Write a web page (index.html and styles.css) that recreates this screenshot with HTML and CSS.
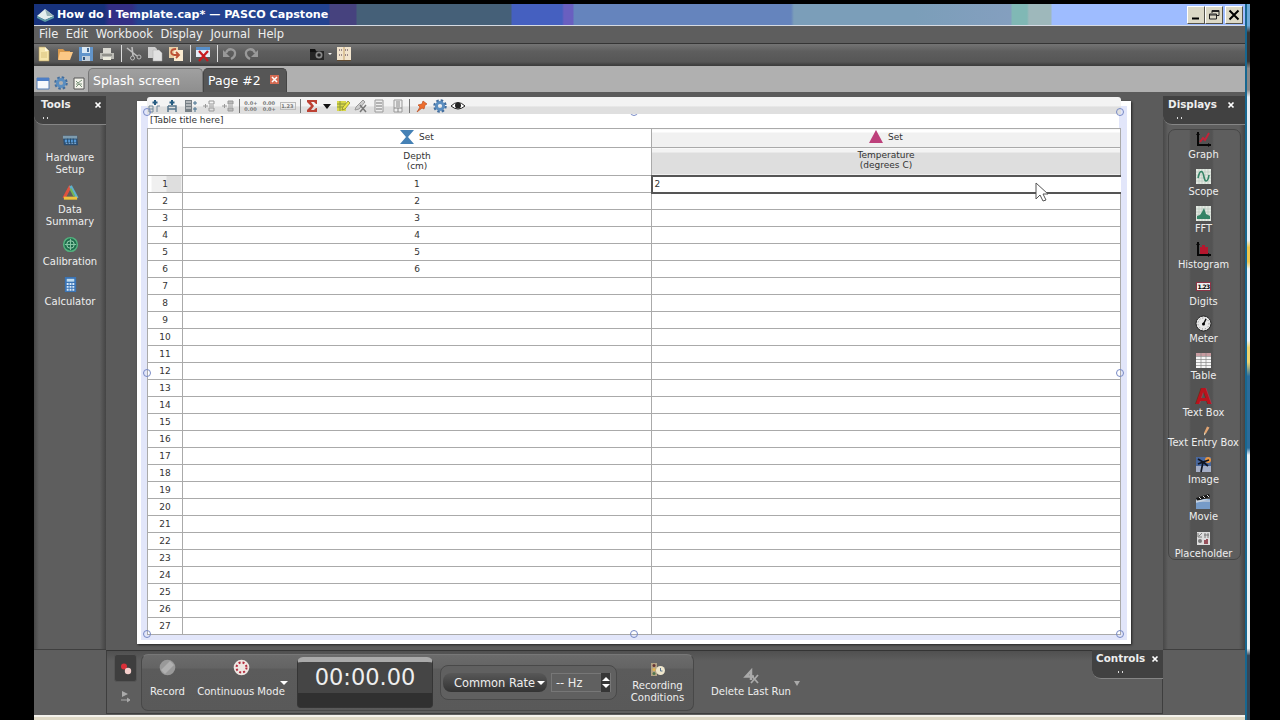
FILE: index.html
```html
<!DOCTYPE html>
<html lang="en">
<head>
  <meta charset="UTF-8" />
  <title>How do I Template.cap* — PASCO Capstone</title>
  <link rel="stylesheet" href="styles.css">
</head>
<body>
  <div class="screen">
    <div class="window">
      <!-- Title bar -->
      <header class="titlebar">
        <svg class="app-icon" viewBox="0 0 17 14"><path d="M8 1L0 8l8 4 9-4z" fill="#e4efed"/><path d="M8 1l2 7 7 0z" fill="#9ab5b8"/><path d="M0 8l8 4 9-4v2l-9 4-8-4z" fill="#5b9aa5"/></svg>
        <span class="title">How do I Template.cap* — PASCO Capstone</span>
        <div class="window-buttons">
          <button><svg viewBox="0 0 14 14"><path d="M3 10.500h7" stroke="#000" stroke-width="2"/></svg></button>
          <button><svg viewBox="0 0 14 14" fill="none" stroke="#222"><path d="M5 5V2.500h7v5h-2M5 3.500h7M2.500 6h7v5h-7zM2.500 7h7"/></svg></button>
          <button class="close"><svg viewBox="0 0 14 14"><path d="M2.500 2.500l9 9M11.500 2.500l-9 9" stroke="#000" stroke-width="2"/></svg></button>
        </div>
      </header>

      <nav class="menubar">
        <span>File</span><span>Edit</span><span>Workbook</span><span>Display</span><span>Journal</span><span>Help</span>
      </nav>

      <!-- Main toolbar -->
      <div class="toolbar">
        <svg class="tool" viewBox="0 0 16 16"><path d="M3 1h6l4 4v10H3z" fill="#f6e6ac" stroke="#b69b5d" stroke-width=".6"/><path d="M9 1v4h4" fill="#fff8db"/><path d="M5 7h6M5 9h6M5 11h6" stroke="#d9c27d"/></svg>
        <svg class="tool" viewBox="0 0 16 16"><path d="M1 3h5l2 2h5v8H1z" fill="#d99a4e"/><path d="M3 6h13l-3 8H1z" fill="#fbc785"/></svg>
        <svg class="tool" viewBox="0 0 16 16"><path d="M1 1h14v14H1z" fill="#6295cb"/><path d="M4 1h8v6H4z" fill="#dbe9f4"/><path d="M4 10h8v5H4z" fill="#c3d0dc"/><path d="M5 11h2v3H5z" fill="#31547c"/><path d="M9 2h2v4H9z" fill="#476f9d"/></svg>
        <svg class="tool" viewBox="0 0 16 16"><path d="M4 2h8v5H4z" fill="#dad9d2"/><path d="M1 7h14v6H1z" fill="#bbbbb5"/><path d="M3 9h10" stroke="#686862"/><path d="M4 11h8v3H4z" fill="#ecebdd"/></svg>
        <i class="sep"></i>
        <svg class="tool" viewBox="0 0 16 16" fill="none" stroke="#bdbdbd"><path d="M1 2l10 8M6 1l1 9" stroke-width="1.600"/><circle cx="6.500" cy="12" r="2"/><circle cx="13" cy="11" r="2"/></svg>
        <svg class="tool" viewBox="0 0 16 16"><path d="M1 1h7l2 2v9H1z" fill="#cfcfcf"/><path d="M6 4h6l3 3v8H6z" fill="#e1e1e1" stroke="#aaa" stroke-width=".5"/></svg>
        <svg class="tool" viewBox="0 0 16 16"><path d="M1 1h9v11H1z" fill="#e8cfa7"/><path d="M6 4h9v11H6z" fill="#f9ead0"/><path d="M8 3C2 3 2 8 6 9h4M8 6l3 3-3 3" fill="none" stroke="#bd5236" stroke-width="1.800"/></svg>
        <i class="sep"></i>
        <svg class="tool" viewBox="0 0 16 16"><path d="M1 1h14v10H1z" fill="#e4edf7"/><path d="M1 1h14v3H1z" fill="#568fcb"/><path d="M4 5l9 10M13 5L4 15" stroke="#c71b21" stroke-width="2.300"/></svg>
        <i class="sep"></i>
        <svg class="tool" viewBox="0 0 16 16"><path d="M4 7c2-6 10-4 9 1 0 3-2 4-4 5" fill="none" stroke="#999" stroke-width="2.300"/><path d="M1 4v7h7z" fill="#999"/></svg>
        <svg class="tool" viewBox="0 0 16 16"><path d="M12 7C10 1 2 3 3 8c0 3 2 4 4 5" fill="none" stroke="#999" stroke-width="2.300"/><path d="M15 4v7H8z" fill="#999"/></svg>
        <svg class="tool camera" viewBox="0 0 16 16"><path d="M1 3h5l1 2h8v9H1z" fill="#252525"/><path d="M1 3h5l1 3H1z" fill="#111"/><circle cx="10" cy="9" r="3.500" fill="#888"/><circle cx="10" cy="9" r="1.800" fill="#222"/></svg>
        <i class="tiny-arrow"></i>
        <svg class="tool journal" viewBox="0 0 16 16"><path d="M1 1h14v13H1z" fill="#f1e4cd"/><path d="M1 14.500h14" stroke="#614b32"/><path d="M8 1v13" stroke="#c7a469"/><path d="M3 4h4M3 9h4M9 4h4M9 9h4" stroke="#9a8888" stroke-width="2" stroke-dasharray="1 1"/></svg>
      </div>

      <!-- Page tabs -->
      <div class="tabbar">
        <svg class="tab-tool" viewBox="0 0 14 14"><path d="M1 2h12v11H1z" fill="#f7f9fc" stroke="#577eb6"/><path d="M1 2h12v3H1z" fill="#4d7ec6"/></svg>
        <svg class="tab-tool" viewBox="0 0 14 14"><use href="#gear"/></svg>
        <svg class="tab-tool" viewBox="0 0 14 14"><path d="M2 2h10v11H2z" fill="#f4f4ec" stroke="#555"/><path d="M4 5l2 2 4-3M4 11l3-3 3 3M4 8h6" fill="none" stroke="#799178"/></svg>
        <div class="tab">Splash screen</div>
        <div class="tab active">Page #2 <span class="tab-close"><svg viewBox="0 0 9 9"><path d="M2 2l5 5M7 2L2 7" stroke="#fff" stroke-width="1.500"/></svg></span></div>
      </div>

      <div class="main">
        <aside class="panel tools">
          <div class="panel-title"><b>Tools</b><svg class="panel-close" viewBox="0 0 8 8"><use href="#close"/></svg><i class="dots"></i></div>
          <div class="tool-list">
            <div class="item"><svg viewBox="0 0 18 18"><path d="M1 4h15l1 10H2z" fill="#294d72"/><path d="M1 4h15v3H1z" fill="#7e9caf"/><path d="M3 8h12v3H3z" fill="#5598d7"/><path d="M4 12h11" stroke="#8ebbe3" stroke-dasharray="2 1"/><path d="M6 7v5M9 7v5M12 7v5" stroke="#244967"/></svg><span>Hardware<br>Setup</span></div>
            <div class="item"><svg viewBox="0 0 18 18" fill="none" stroke-width="3.200"><path d="M9 2L2 15" stroke="#e0523f"/><path d="M9 2l7 13" stroke="#5fb0cc"/><path d="M2 15h14" stroke="#efc23c"/><path d="M9 5l4 8" stroke="#75b454" stroke-width="2"/></svg><span>Data<br>Summary</span></div>
            <div class="item"><svg viewBox="0 0 18 18" fill="none"><circle cx="9" cy="9" r="7.300" fill="#1f6e4d" stroke="#54b37f" stroke-width="1.500"/><circle cx="9" cy="9" r="4" stroke="#a1d7b9"/><path d="M9 3v12M3 9h12" stroke="#8acba7"/></svg><span>Calibration</span></div>
            <div class="item"><svg viewBox="0 0 18 18"><path d="M3 1h12v16H3z" fill="#3b75b6"/><path d="M5 3h8v3H5z" fill="#bedbef"/><path d="M5 8.500h8M5 11.500h8M5 14.500h8" stroke="#d9eafb" stroke-width="2" stroke-dasharray="2 1"/></svg><span>Calculator</span></div>
          </div>
        </aside>

        <section class="workspace">
          <div class="page">
            <div class="page-inner">
              <!-- Table display tools -->
              <div class="table-tools">
                <svg viewBox="0 0 14 14"><path d="M2 7h4v6H2zM2 10h4M10 13V7h3" fill="none" stroke="#718899"/><path d="M8 1v5M5.500 3.500h5" stroke="#285d82" stroke-width="2"/></svg>
                <svg viewBox="0 0 14 14"><path d="M3 7h8v6M3 7v6M3 10h8" fill="none" stroke="#56748b" stroke-width="1.500"/><path d="M7 1v5M4.500 3.500h5" stroke="#285d82" stroke-width="2"/></svg>
                <svg viewBox="0 0 14 14"><path d="M1 1h7v12H1z" fill="#777f85"/><path d="M2 3h5M2 6h5M2 9h5" stroke="#eee"/><path d="M11 2v4M9 4h4M11 8v5M9 10h4" stroke="#47718e"/></svg>
                <svg viewBox="0 0 14 14" fill="none" stroke="#999"><path d="M7 2h5v3H7zM7 9h5v3H7zM7 7h5M1 7h5M3.500 5v4"/></svg>
                <svg viewBox="0 0 14 14" fill="none" stroke="#999"><path d="M7 2h5v3H7zM7 9h5v3H7z" fill="#bbb"/><path d="M7 7h5M1 7h5M3.500 5v4"/></svg>
                <i></i>
                <span class="digits">0.0+<br>0.00</span>
                <span class="digits">0.00<br>0.0+</span>
                <span class="digits boxed">1.23</span>
                <i></i>
                <svg viewBox="0 0 14 14"><path d="M2 1h10v4h-1L9 3H6l3 4-3 4h3l2-2h1v4H2v-2l4-4-4-4z" fill="#bd4133"/></svg>
                <svg class="arrow" viewBox="0 0 8 14"><path d="M0 5h8l-4 5z" fill="#111"/></svg>
                <svg viewBox="0 0 14 14"><path d="M1 2h9v10H1z" fill="#d9d84b"/><path d="M1 5h9M1 8h9M4 2v10" stroke="#8c983a"/><path d="M6 11l1-3 5-6 2 2-5 6z" fill="#ece849" stroke="#7e7e2c" stroke-width=".7"/></svg>
                <svg viewBox="0 0 14 14"><path d="M1 11l1-3 7-7 2 2-6 7z" fill="#ccc" stroke="#999"/><path d="M6 6l6 7M12 6l-6 7" stroke="#777" stroke-width="1.500"/></svg>
                <svg viewBox="0 0 14 14"><path d="M3 1h8v12H3z" fill="#eee" stroke="#999"/><path d="M4 4h6M4 7h6M4 10h6" stroke="#777"/></svg>
                <svg viewBox="0 0 14 14"><path d="M3 1h8v12H3z" fill="#eee" stroke="#999"/><path d="M5 3h4M5 5h4M5 7h4M3 9h8M7 9v4" stroke="#888"/></svg>
                <i></i>
                <svg viewBox="0 0 14 14"><path d="M8 2l4 3-2 1-1 4-2-1-5 4 3-5-2-2 4-1z" fill="#ee6d2c" stroke="#bd4e20" stroke-width=".7"/></svg>
                <svg viewBox="0 0 14 14"><use href="#gear"/></svg>
                <svg viewBox="0 0 14 14"><path d="M0 7q7-7 14 0-7 6-14 0" fill="#fff" stroke="#222"/><circle cx="7" cy="6.500" r="3" fill="#222"/></svg>
              </div>
              <div class="table-title">[Table title here]</div>
              <table>
                <colgroup><col class="col-num"><col class="col-data"><col class="col-data"></colgroup>
                <thead>
                  <tr class="set-row">
                    <th rowspan="2"></th>
                    <th><div class="set"><svg viewBox="0 0 14 14"><path d="M0 0h14L8 7l6 7H0l6-7z" fill="#4581b5"/></svg>Set</div></th>
                    <th class="selected"><div class="set"><svg viewBox="0 0 14 14"><path d="M7 0l7 13H0z" fill="#bd407b"/></svg>Set</div></th>
                  </tr>
                  <tr class="unit-row">
                    <th>Depth<br>(cm)</th>
                    <th class="selected">Temperature<br>(degrees C)</th>
                  </tr>
                </thead>
                <tbody id="tableBody">
                  <!-- Filled by JavaScript -->
                </tbody>
              </table>
              <!-- Resize handles -->
              <i class="handle tl"></i><i class="handle tr"></i><i class="handle tm"></i>
              <i class="handle ml"></i><i class="handle mr"></i>
              <i class="handle bl"></i><i class="handle bm"></i><i class="handle br"></i>
              <svg class="cursor" viewBox="0 0 14 21"><path d="M1 1v16l4-4 3 6 3-1-3-6h5z" fill="#fff" stroke="#555"/></svg>
            </div>
          </div>
        </section>

        <aside class="panel displays">
          <div class="panel-title"><b>Displays</b><svg class="panel-close" viewBox="0 0 8 8"><use href="#close"/></svg><i class="dots"></i></div>
          <div class="display-list">
            <div class="item"><svg viewBox="0 0 17 17"><path d="M3 1v13h13" fill="none" stroke="#080808" stroke-width="2"/><path d="M1 4l2-3 2 3M13 12l3 2-3 2" fill="#080808"/><path d="M5 11l3-4 2 2 4-7" fill="none" stroke="#c42238" stroke-width="1.900"/></svg><span>Graph</span></div>
            <div class="item"><svg viewBox="0 0 17 17"><use href="#graph-paper"/><path d="M3 10C5 0 8 3 9 9s4 5 5-2" fill="none" stroke="#348366" stroke-width="1.600"/></svg><span>Scope</span></div>
            <div class="item"><svg viewBox="0 0 17 17"><use href="#graph-paper"/><path d="M2 14v-3l3-1 2-3 2-4 2 6 4 2v3z" fill="#348366"/></svg><span>FFT</span></div>
            <div class="item"><svg viewBox="0 0 17 17"><path d="M3 1v13h13" fill="none" stroke="#080808" stroke-width="2"/><path d="M1 4l2-3 2 3M13 12l3 2-3 2" fill="#080808"/><path d="M5 13V6h2V4h3v2h3v7z" fill="#b5162d"/></svg><span>Histogram</span></div>
            <div class="item"><div class="digits-icon">1.23</div><span>Digits</span></div>
            <div class="item"><svg viewBox="0 0 17 17"><circle cx="8.500" cy="8.500" r="7.500" fill="#e8e8e8" stroke="#222"/><circle cx="8.500" cy="8.500" r="5.500" fill="none" stroke="#888" stroke-dasharray="1 2"/><path d="M8.500 9L11 4" stroke="#111" stroke-width="1.500"/><circle cx="8.500" cy="9" r="1.500"/></svg><span>Meter</span></div>
            <div class="item"><svg viewBox="0 0 17 17"><path d="M1 1h15v15H1z" fill="#f6f6f6"/><path d="M1 1h15v3H1z" fill="#c79ba0"/><path d="M1 4.500h15M1 7.500h15M1 10.500h15M1 13.500h15M6 1v15M11 1v15" stroke="#888" stroke-width=".7"/></svg><span>Table</span></div>
            <div class="item"><div class="letter-icon">A</div><span>Text Box</span></div>
            <div class="item short"><svg viewBox="0 0 17 11"><path d="M9 8l3-6.500 2.500 1L11 8.500z" fill="#e3a674"/><path d="M9 8l2 .500L9 10.500z" fill="#ecd9b8"/></svg><span>Text Entry Box</span></div>
            <div class="item"><svg viewBox="0 0 17 17"><path d="M1 1h15v15H1z" fill="#48679d"/><path d="M1 10h15v6H1z" fill="#a6afc7"/><circle cx="13" cy="4" r="3" fill="#e89643"/><path d="M8 6L6 16M8 6L3 3M8 6l6-2M8 6L3 8M8 6l5 4" stroke="#101522" stroke-width="1.700"/></svg><span>Image</span></div>
            <div class="item"><svg viewBox="0 0 17 17"><path d="M1 6h14v10H1z" fill="#b4cbe8"/><path d="M1 10l14-4v10H1z" fill="#769bc8"/><path d="M1 5l13-4 1 3L2 8z" fill="#171717"/><path d="M4 4l2 2M8 3l2 2M12 2l2 2M1 8h14" stroke="#ddd"/></svg><span>Movie</span></div>
            <div class="item"><svg viewBox="0 0 17 17"><path d="M2 2h13v13H2z" fill="#ddd"/><path d="M3 3v4h4M4 6l3-3M10 3v5M13 3v5M9 5h5" fill="none" stroke="#666" stroke-width=".8"/><circle cx="5" cy="11" r="2" fill="#777"/><path d="M9 14v-4h2v-1h2v5z" fill="#96505b"/></svg><span>Placeholder</span></div>
          </div>
        </aside>
      </div>

      <!-- Recording controls -->
      <footer class="bottom">
        <div class="controls">
          <div class="modes">
            <div class="mode-on"><svg viewBox="0 0 14 14"><circle cx="5" cy="4.500" r="3" fill="#da3039"/><circle cx="9" cy="9" r="3.200" fill="#f4cecb"/></svg></div>
            <svg class="mode-play" viewBox="0 0 14 14"><path d="M3 1l6 3-6 3z" fill="#aaa"/><path d="M2 10h8M8 8l3 2-3 2" stroke="#aaa" fill="#aaa"/></svg>
          </div>
          <div class="control-group">
            <div class="ctl record"><svg viewBox="0 0 17 17"><circle cx="8.500" cy="8.500" r="7.800" fill="#999"/><path d="M2 11l9-9 4 4-9 9z" fill="#b0b0b0"/></svg><span>Record</span></div>
            <div class="ctl continuous"><svg viewBox="0 0 17 17"><circle cx="8.500" cy="8.500" r="7.800" fill="#eee6e2"/><circle cx="8.500" cy="8.500" r="5" fill="none" stroke="#b32b3d" stroke-width="2" stroke-dasharray="2 2"/></svg><span>Continuous Mode</span><i class="down"></i></div>
            <div class="timer"><div class="time">00:00.00</div></div>
            <div class="rate"><div class="common">Common Rate<i class="down"></i></div><div class="hz"><span>-- Hz</span><div class="spin"><i class="up"></i><i class="down"></i></div></div></div>
            <div class="ctl conditions"><svg viewBox="0 0 17 17"><path d="M2 2h6v13H2z" fill="#b3a283"/><circle cx="5" cy="4.500" r="1.500" fill="#633"/><circle cx="5" cy="8.500" r="1.500" fill="#e4b34d"/><circle cx="5" cy="12.500" r="1.500" fill="#50764d"/><circle cx="11.500" cy="9.500" r="4.500" fill="#eee6cc"/><path d="M11.500 7v3h2" fill="none" stroke="#597792"/></svg><span>Recording<br>Conditions</span></div>
          </div>
          <div class="ctl delete"><svg viewBox="0 0 17 17" fill="none" stroke="#aaa"><path d="M8 12V3L3 8.500h8" stroke-width="2.500"/><path d="M8 7l7 8M15 7l-7 8" stroke-width="1.800"/></svg><span>Delete Last Run</span><i class="hollow"></i></div>
          <div class="panel-title controls-title"><b>Controls</b><svg class="panel-close" viewBox="0 0 8 8"><use href="#close"/></svg><i class="dots"></i></div>
        </div>
      </footer>
      <div class="taskbar"></div>
    </div>
    <div class="desktop-edge"></div>
  </div>

  <!-- Shared icons -->
  <svg class="defs">
    <symbol id="gear" viewBox="0 0 14 14"><circle cx="7" cy="7" r="5.500" fill="none" stroke="#426d9d" stroke-width="2.500" stroke-dasharray="2.400 1.920"/><circle cx="7" cy="7" r="3.600" fill="none" stroke="#5b8ec0" stroke-width="3"/></symbol>
    <symbol id="close" viewBox="0 0 8 8"><path d="M1.500 1.500l5 5M6.500 1.500l-5 5" stroke="#fff" stroke-width="1.700"/></symbol>
    <symbol id="graph-paper" viewBox="0 0 17 17"><path d="M1 1h15v15H1z" fill="#e3e9e2"/><path d="M4 1v15M7 1v15M10 1v15M13 1v15M1 4h15M1 7h15M1 10h15M1 13h15" stroke="#b2c3b9" stroke-width=".6"/></symbol>
  </svg>

  <script>
    const tableBody = document.getElementById('tableBody');
    for (let i = 1; i <= 27; i++) {
      const row = document.createElement('tr');
      row.innerHTML = `
        <td>${i}</td>
        <td>${i <= 6 ? i : ''}</td>
        <td class="${i === 1 ? 'editing' : ''}">${i === 1 ? '2' : ''}</td>
      `;
      tableBody.appendChild(row);
    }
  </script>
</body>
</html>
```
FILE: styles.css
```css
* {
  box-sizing: border-box;
}

body {
  margin: 0;
  background: #000;
  font-family: "DejaVu Sans", sans-serif;
  font-size: 10px;
  color: #eee;
  overflow: hidden;
}

svg {
  display: block;
  flex: none;
}

.defs {
  display: none;
}

.screen {
  width: 1280px;
  height: 720px;
  padding: 4px 30px 0 34px;
  display: flex;
}

.window {
  width: 1211px;
  height: 716px;
  display: flex;
  flex-direction: column;
  background: #5e5e5e;
}

.desktop-edge {
  width: 5px;
  background: linear-gradient(90deg, #176790 2px, transparent 2px), linear-gradient(#6da9d8 0 3%, #333 4% 8%, #888 9% 12%, #e4edf4 13% 33%, #edc64d 34% 36%, #e9f1f5 37% 47%, #ecd46f 48% 50%, #2a6b99 52% 62%, #e9f1f5 63% 90%, #345 91%);
}

/* Title bar */
.titlebar {
  height: 22px;
  flex: none;
  display: flex;
  align-items: center;
  padding-left: 3px;
  border-bottom: 1px solid #d6dbe3;
  background: linear-gradient(90deg, #17327c 0 70px, #332f85 75px 98px, #23428f 104px 295px, #46427e 296px 322px, #456078 323px 477px, #4560c0 478px 528px, #695fc0 530px 539px, #6584bd 540px 757px, #7b9eb9 760px 880px, #849fbf 977px, #80b8b5 978px 993px, #9eb8bb 995px 1017px, #9ebcff 1018px);
}

.app-icon {
  width: 17px;
  height: 14px;
}

.title {
  margin-left: 3px;
  font-size: 11.15px;
  font-weight: bold;
  color: #fff;
  white-space: nowrap;
}

.window-buttons {
  margin-left: auto;
  padding-right: 2px;
  display: flex;
}

.window-buttons button {
  width: 18px;
  height: 18px;
  padding: 1px;
  background: #dcd9c7;
  border: 1px solid;
  border-color: #fff #55534b #55534b #fff;
}

.window-buttons .close {
  margin-left: 2px;
}

.menubar {
  height: 18px;
  flex: none;
  display: flex;
  gap: 7.6px;
  padding-left: 5px;
  line-height: 16px;
  font-size: 11.5px;
  border-bottom: 1px solid #353535;
}

/* Main toolbar */
.toolbar {
  height: 22px;
  flex: none;
  display: flex;
  align-items: center;
  padding-bottom: 2px;
  background: linear-gradient(#747474, #5e5e5e 35%, #565656 85%, #3f3f3f);
  border-bottom: 1px solid #3e3e3e;
}

.tool {
  width: 16px;
  height: 16px;
  margin: 0 2.5px;
}

.tool:first-child {
  margin-left: 1.5px;
}

.sep {
  width: 1px;
  height: 17px;
  margin: 0 1px 0 4px;
  background: #ddd;
}

.camera {
  margin-left: 48px;
}

.tiny-arrow {
  border: 2px solid transparent;
  border-top-color: #eee;
  border-bottom: 0;
}

.journal {
  margin-left: 4px;
}

/* Tabs */
.tabbar {
  height: 26px;
  flex: none;
  display: flex;
  align-items: flex-end;
  padding-left: 2px;
  background: #b0b0b0;
}

.tab-tool {
  width: 14px;
  height: 14px;
  margin: 0 4px 2px 0;
}

.tab-tool:nth-child(3) {
  margin-right: 2px;
}

.tab {
  height: 24px;
  width: 115px;
  padding: 3px 4px;
  font-size: 12.5px;
  line-height: 17px;
  color: #fff;
  background: linear-gradient(#a0a0a0, #8e8e8e);
  border: 1px solid #777;
  border-bottom: 0;
  border-radius: 5px 5px 0 0;
  white-space: nowrap;
}

.tab.active {
  width: 84px;
  background: #565656;
  border-color: #444;
  display: flex;
  align-items: center;
  justify-content: space-between;
}

.tab-close {
  width: 9px;
  height: 9px;
  margin: 0 3px 2px 0;
  background: #d46a52;
}

/* Panels */
.main {
  height: 558px;
  flex: none;
  display: grid;
  grid-template-columns: 72px 1fr 82px;
  background: #5b5b5b;
}

.panel {
  margin-top: 4px;
  border-bottom: 1px solid #3f3f3f;
  background: linear-gradient(90deg, #484848, #5e5e5e 5px calc(100% - 6px), #444);
}

.panel-title {
  height: 29px;
  display: grid;
  grid-template-columns: 1fr auto;
  align-content: start;
  padding: 2px 4px 0 7px;
  background: #414141;
  border-bottom: 1px solid #858585;
  border-radius: 0 0 0 9px;
  font-size: 10.4px;
  line-height: 13px;
}

.panel-close {
  width: 8px;
  height: 8px;
  margin-top: 3px;
}

.dots {
  width: 5px;
  height: 2px;
  margin: 6px 0 0 2px;
  border: solid #ddd;
  border-width: 0 1px;
}

.tool-list {
  padding-top: 7px;
  display: flex;
  flex-direction: column;
  gap: 8px;
}

.item {
  display: flex;
  flex-direction: column;
  align-items: center;
  text-align: center;
  line-height: 12px;
  white-space: nowrap;
}

.tools .item svg {
  width: 17px;
  height: 17px;
  margin-bottom: 3px;
}

.displays .panel-title {
  padding-left: 5px;
  padding-right: 10px;
}

.displays .dots {
  margin-left: 9px;
}

.display-list {
  width: 73px;
  height: 431px;
  margin: 4px 0 0 5px;
  padding: 1px 2px 0 0;
  border: 1px solid #454545;
  border-radius: 7px;
  background: linear-gradient(90deg, transparent 20px, #535353 22px 43px, transparent 45px);
}

.display-list .item {
  height: 36.8px;
  font-size: 9.9px;
  line-height: 13px;
}

.display-list svg {
  width: 17px;
  height: 17px;
}

.display-list .short {
  height: 31px;
}

.display-list .short svg {
  height: 11px;
}

.digits-icon {
  width: 15px;
  height: 9px;
  margin: 4px 0;
  background: #eee;
  border: 1px solid #8d3446;
  color: #000;
  font-size: 6px;
  line-height: 7px;
  font-weight: bold;
  letter-spacing: -0.7px;
}

.letter-icon {
  height: 17px;
  color: #b9141d;
  font: bold 21px/17px "DejaVu Sans", sans-serif;
}

/* Page with the table */
.workspace {
  padding: 9px 0 0 31px;
}

.page {
  width: 994px;
  height: 543px;
  padding: 5px 4px 4px;
  background: #fff;
  box-shadow: 1px 1px 2px #222;
}

.page-inner {
  position: relative;
  height: 534px;
  padding: 8px 8px 7px 7px;
  background: #e2e6fa;
}

.table-tools {
  position: absolute;
  left: 6px;
  top: -9px;
  width: 974px;
  height: 17px;
  display: flex;
  align-items: center;
  gap: 4.4px;
  background: linear-gradient(#f3f3f3 50%, #dfdfdf 60%);
  border-radius: 3px 3px 0 0;
}

.table-tools svg {
  width: 14px;
  height: 14px;
}

.table-tools .arrow {
  width: 8px;
}

.table-tools i {
  width: 1px;
  height: 14px;
  background: #777;
}

.digits {
  width: 14px;
  color: #777;
  font-size: 5px;
  line-height: 6px;
  font-weight: bold;
}

.boxed {
  outline: 1px solid #bbb;
}

.table-title {
  height: 14px;
  padding-left: 2px;
  background: #fff;
  color: #333;
  font-size: 8.95px;
  line-height: 13px;
}

table {
  width: 974px;
  margin-left: -1px;
  table-layout: fixed;
  border-collapse: collapse;
  background: #fff;
  color: #333;
  font-size: 9px;
}

.col-num {
  width: 35px;
}

th, td {
  padding: 0;
  border: 1px solid #aaa;
  font-weight: normal;
  text-align: center;
}

tbody tr {
  height: 17px;
}

td {
  line-height: 15px;
}

.set-row {
  height: 19px;
}

.unit-row {
  height: 28px;
  line-height: 10px;
}

.unit-row th {
  padding-bottom: 2px;
}

.set-row .selected {
  background: linear-gradient(#fff 3px, #f1f1f1 3px);
}

.unit-row .selected {
  background: linear-gradient(#f3f3f3 4px, #dedede 4px 26px, #fff 26px);
}

.set {
  display: flex;
  justify-content: center;
  align-items: center;
  gap: 5px;
  padding-bottom: 2px;
}

.set svg {
  width: 14px;
  height: 14px;
}

tbody tr:first-child td:first-child {
  background: linear-gradient(90deg, #fff 3px, #f0f0f0 3px 18px, #dedede 18px 33px, #fff 33px);
}

td.editing {
  padding-left: 2px;
  text-align: left;
  border: 2px solid #555;
  border-right: 0;
  line-height: 14px;
}

.handle {
  position: absolute;
  width: 8px;
  height: 8px;
  border: 1px solid #7789c5;
  border-radius: 50%;
}

.tl, .ml, .bl { left: 2px; }
.tr, .mr, .br { right: 3px; }
.tm, .bm { left: 489px; }
.tl, .tr { top: 2px; }
.ml, .mr { top: 263px; }
.bl, .bm, .br { bottom: 2px; }

.tm {
  top: 2px;
  clip-path: inset(6px 0 0);
}

.cursor {
  position: absolute;
  left: 894px;
  top: 76px;
  width: 14px;
  height: 21px;
}

/* Recording controls */
.bottom {
  height: 65px;
  flex: none;
  padding: 0 82px 0 72px;
}

.controls {
  height: 64px;
  display: flex;
  border: 1px solid #3e3e3e;
  border-top-color: #343434;
  background: linear-gradient(#505050, #5e5e5e 10px);
}

.modes {
  width: 34px;
  padding: 3px 0 0 7px;
}

.mode-on {
  width: 23px;
  height: 28px;
  padding: 7px 4px;
  background: #3e3e3e;
  border: 1px solid #555;
  border-radius: 3px;
}

.modes svg {
  width: 14px;
  height: 14px;
}

.mode-play {
  margin: 8px 0 0 5px;
}

.control-group {
  width: 553px;
  height: 57px;
  margin-top: 3px;
  display: flex;
  background: linear-gradient(#6b6b6b, #646464 13px, #5b5b5b 14px, #595959);
  border: 1px solid #484848;
  border-top-color: #777;
  border-radius: 7px;
}

.ctl {
  position: relative;
  display: flex;
  flex-direction: column;
  align-items: center;
  text-align: center;
  font-size: 10.1px;
  line-height: 12px;
  white-space: nowrap;
}

.ctl svg {
  width: 17px;
  height: 17px;
}

.record {
  width: 51px;
  padding-top: 4px;
}

.continuous {
  width: 96px;
  padding-top: 4px;
}

.record span, .continuous span {
  margin-top: 10px;
}

.down, .up {
  border: 4px solid transparent;
  border-top-color: #fff;
  border-bottom: 0;
}

.up {
  border-top: 0;
  border-bottom: 4px solid #fff;
}

.continuous .down {
  position: absolute;
  right: 1px;
  top: 26px;
}

.timer {
  width: 136px;
  height: 51px;
  margin: 2px 0 0 8px;
  border: 1px solid #353535;
  border-top: 5px solid #aaa;
  border-radius: 6px 6px 4px 4px;
  background: linear-gradient(#454545 31px, #303030 31px);
}

.time {
  font-size: 22.5px;
  line-height: 31px;
  text-align: center;
}

.rate {
  width: 177px;
  height: 35px;
  margin: 10px 0 0 7px;
  display: flex;
  align-items: center;
  padding-left: 2px;
  border: 1px solid #494949;
  border-radius: 8px;
  background: #606060;
}

.common {
  width: 104px;
  height: 19px;
  display: flex;
  align-items: center;
  justify-content: flex-end;
  gap: 2px;
  padding-right: 2px;
  border-radius: 8px;
  background: linear-gradient(#585858, #333);
  font-size: 11.4px;
  white-space: nowrap;
}

.hz {
  height: 19px;
  width: 60px;
  margin-left: 4px;
  padding-left: 4px;
  display: flex;
  align-items: center;
  justify-content: space-between;
  border: 1px solid #777;
  font-size: 11.4px;
}

.spin {
  width: 9px;
  height: 19px;
  background: #363636;
  display: flex;
  flex-direction: column;
  align-items: center;
  justify-content: space-evenly;
}

.conditions {
  width: 76px;
  padding: 6px 0 0 5px;
}

.conditions span {
  margin-top: 2px;
}

.delete {
  width: 114px;
  padding-top: 17px;
}

.delete span {
  margin-top: 1px;
}

.hollow {
  position: absolute;
  right: 8px;
  top: 30px;
  width: 6px;
  height: 5px;
  background: #aaa;
  clip-path: polygon(0 0, 100% 0, 50% 100%);
}

.controls-title {
  width: 71px;
  margin-left: auto;
  margin-right: -1px;
  margin-top: -1px;
  padding-left: 4px;
}

.controls-title .dots {
  margin-left: 22px;
}

.taskbar {
  height: 5px;
  flex: none;
  background: #ded8c5;
  border-top: 2px solid #f4f2ec;
}
```
